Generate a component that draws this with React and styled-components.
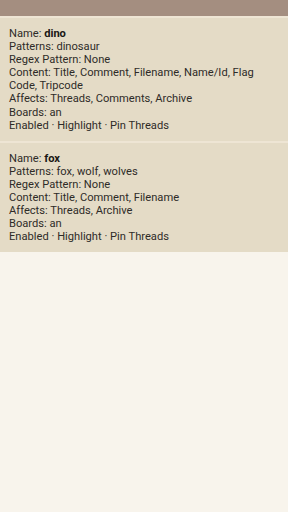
import React from 'react'
import styled, { createGlobalStyle } from 'styled-components'

const GlobalStyle = createGlobalStyle`
  html, body {
    margin: 0;
    padding: 0;
    background: #f8f4ec;
  }
  body {
    font-family: Roboto, "Noto Sans", sans-serif;
  }
`

const Page = styled.div`
  width: 288px;
  min-height: 512px;
  background: #f8f4ec;
`
const TopBar = styled.div`
  height: 16px;
  background: #a48e80;
`
const List = styled.div`
  display: flex;
  flex-direction: column;
`
const Card = styled.div`
  background: #e4dbc6;
  border-top: 2px solid #eee5d4;
  padding: 9px 9px 9px;
`
const Line = styled.div`
  font-size: 11.15px;
  line-height: 13.1px;
  color: #2e2b28;
`
const Bold = styled.span`
  font-weight: 700;
  color: #1a1714;
`

const filters = [
  {
    name: 'dino',
    patterns: 'dinosaur',
    regex: 'None',
    content: 'Title, Comment, Filename, Name/Id, Flag Code, Tripcode',
    affects: 'Threads, Comments, Archive',
    boards: 'an',
    flags: 'Enabled · Highlight · Pin Threads',
  },
  {
    name: 'fox',
    patterns: 'fox, wolf, wolves',
    regex: 'None',
    content: 'Title, Comment, Filename',
    affects: 'Threads, Archive',
    boards: 'an',
    flags: 'Enabled · Highlight · Pin Threads',
  },
]

const App = () => {
  return (
    <>
      <GlobalStyle />
      <Page>
        <TopBar />
        <List>
          {filters.map((f) => (
            <Card key={f.name}>
              <Line>
                Name: <Bold>{f.name}</Bold>
              </Line>
              <Line>Patterns: {f.patterns}</Line>
              <Line>Regex Pattern: {f.regex}</Line>
              <Line>Content: {f.content}</Line>
              <Line>Affects: {f.affects}</Line>
              <Line>Boards: {f.boards}</Line>
              <Line>{f.flags}</Line>
            </Card>
          ))}
        </List>
      </Page>
    </>
  )
}
export default App
